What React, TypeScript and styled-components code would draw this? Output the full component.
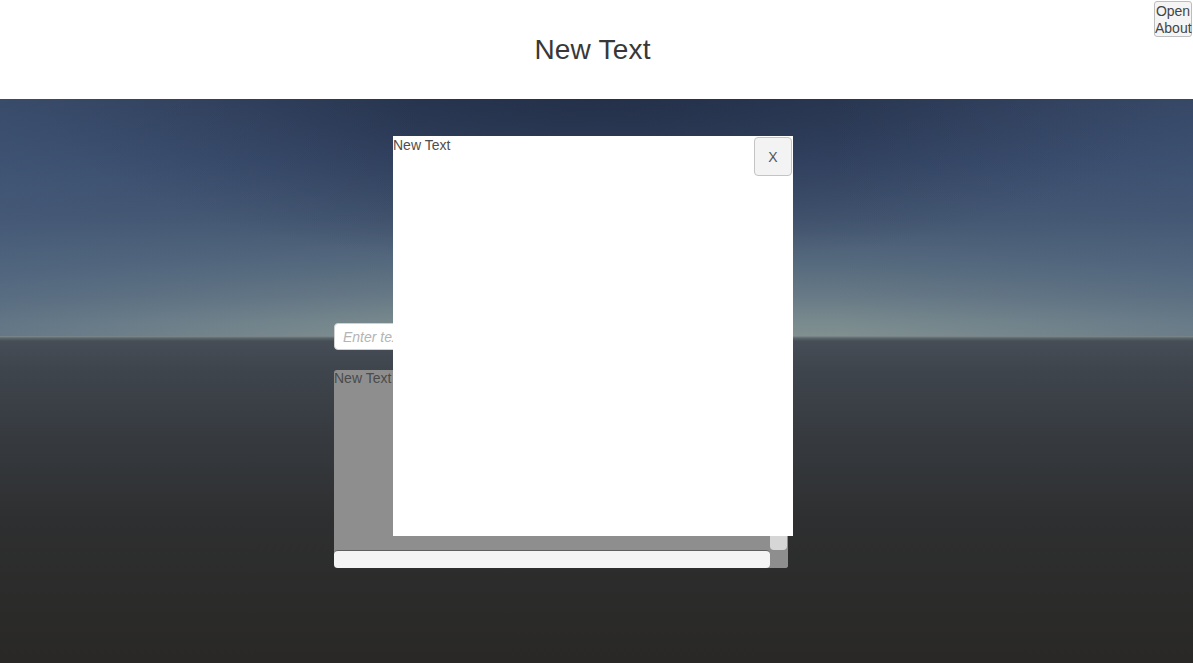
import React from "react";
import styled, { createGlobalStyle } from "styled-components";

const Global = createGlobalStyle`
  html, body { margin: 0; padding: 0; }
  body {
    width: 1193px;
    height: 663px;
    overflow: hidden;
    font-family: "Liberation Sans", Arial, sans-serif;
  }
`;

const Screen = styled.div`
  width: 1193px;
  height: 663px;
  display: flex;
  flex-direction: column;
  position: relative;
`;

const Header = styled.header`
  height: 99px;
  background: #ffffff;
  display: flex;
  align-items: center;
  justify-content: center;
  padding-right: 8px;
  box-sizing: border-box;
  position: relative;
`;

const Title = styled.h1`
  margin: 0;
  font-weight: 400;
  font-size: 28px;
  letter-spacing: 0.2px;
  color: #383838;
  line-height: 1;
`;

const MenuStack = styled.div`
  position: absolute;
  top: 1px;
  right: 1px;
  width: 36px;
  border: 1px solid #bdbdbd;
  border-radius: 3px;
  background: #f5f5f5;
  display: flex;
  flex-direction: column;
`;

const MenuButton = styled.button`
  all: unset;
  display: block;
  height: 17px;
  line-height: 16px;
  font-size: 14px;
  color: #444444;
  text-align: center;
  cursor: pointer;
`;

/* skybox: blue zenith fading to a pale horizon, dark ground below */
const Scene = styled.main`
  flex: 1;
  position: relative;
  background:
    linear-gradient(to right, rgba(70, 92, 124, 0.45), rgba(70, 92, 124, 0) 35%, rgba(70, 92, 124, 0) 70%, rgba(70, 92, 124, 0.35)) 0 0 / 100% 237px no-repeat,
    radial-gradient(ellipse 560px 170px at 600px 0px, rgba(28, 38, 60, 0.55), rgba(28, 38, 60, 0) 100%) 0 0 / 100% 237px no-repeat,
    linear-gradient(
      to bottom,
      #2e3d5a 0px,
      #37496a 60px,
      #445772 120px,
      #566a7e 165px,
      #687a86 198px,
      #7a8b8e 224px,
      #808f90 237px,
      #5d666c 239px,
      #464d56 242px,
      #3f454d 270px,
      #363a3f 340px,
      #2e2f30 420px,
      #292826 564px
    );
  padding: 224px 0 0 334px;
  box-sizing: border-box;
  display: flex;
  flex-direction: column;
  gap: 20px;
`;

const TextInput = styled.div`
  width: 160px;
  height: 27px;
  box-sizing: border-box;
  background: #ffffff;
  border-radius: 4px;
  border: 1px solid #d0d0d0;
  padding: 0 8px;
  display: flex;
  align-items: center;
  font-size: 14px;
  font-style: italic;
  color: #b4b4b4;
`;

const ScrollView = styled.div`
  width: 454px;
  height: 198px;
  background: #8e8e8e;
  border-radius: 3px;
  display: grid;
  grid-template-columns: 436px 18px;
  grid-template-rows: 180px 18px;
  overflow: hidden;
`;

const Viewport = styled.div`
  font-size: 14px;
  color: #4b4b4b;
  line-height: 16px;
`;

const VTrack = styled.div`
  display: flex;
  flex-direction: column;
  justify-content: flex-end;
  padding: 0 1px 0 0;
`;

const VHandle = styled.div`
  height: 40px;
  background: #d6d6d6;
  border-radius: 0 0 4px 4px;
`;

const HTrack = styled.div`
  background: #f4f4f4;
  border-top: 1px solid #5f5f5f;
  border-radius: 4px;
  box-sizing: border-box;
`;

const Corner = styled.div`
  background: #8e8e8e;
`;

const Dialog = styled.section`
  position: absolute;
  left: 393px;
  top: 136px;
  width: 400px;
  height: 400px;
  background: #ffffff;
`;

const DialogText = styled.div`
  font-size: 14px;
  color: #4e4e4e;
  line-height: 16px;
  padding-top: 1px;
`;

const CloseButton = styled.button`
  all: unset;
  position: absolute;
  top: 1px;
  right: 1px;
  width: 38px;
  height: 39px;
  box-sizing: border-box;
  background: #f3f3f3;
  border: 1px solid #c4c4c4;
  border-radius: 4px;
  display: flex;
  align-items: center;
  justify-content: center;
  font-size: 14px;
  color: #555555;
  cursor: pointer;
`;

export default function App() {
  return (
    <>
      <Global />
      <Screen>
        <Header>
          <Title>New Text</Title>
          <MenuStack>
            <MenuButton>Open</MenuButton>
            <MenuButton>About</MenuButton>
          </MenuStack>
        </Header>
        <Scene>
          <TextInput>Enter text...</TextInput>
          <ScrollView>
            <Viewport>New Text</Viewport>
            <VTrack>
              <VHandle />
            </VTrack>
            <HTrack />
            <Corner />
          </ScrollView>
        </Scene>
        <Dialog>
          <DialogText>New Text</DialogText>
          <CloseButton>X</CloseButton>
        </Dialog>
      </Screen>
    </>
  );
}
